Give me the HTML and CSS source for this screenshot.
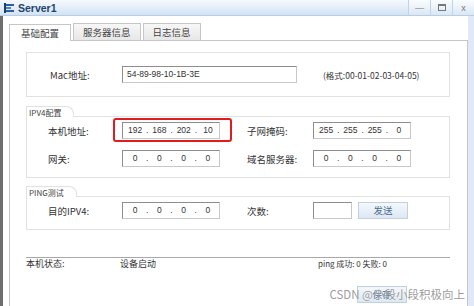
FILE: index.html
```html
<!DOCTYPE html>
<html lang="zh-CN">
<head>
  <meta charset="UTF-8" />
  <title>Server1</title>
  <link rel="stylesheet" href="styles.css">
</head>
<body>

<div class="titlebar">
  <svg class="logo" width="11" height="10" viewBox="0 0 11 10">
    <rect x="1" y="1" width="9" height="2" fill="#2d5f9a"/>
    <rect x="1" y="4" width="6" height="2" fill="#4a86c5"/>
    <rect x="1" y="7" width="9" height="2" fill="#2d5f9a"/>
    <rect x="0" y="0" width="2" height="10" fill="#1d3f6e"/>
  </svg>
  <span class="title">Server1</span>
  <div class="winbtns">
    <span class="wbtn">&#8212;</span>
    <span class="wbtn"><i class="maxbox"></i></span>
    <span class="wbtn">x</span>
  </div>
</div>

<div class="window">
  <div class="tabs">
    <div class="tab active">基础配置</div>
    <div class="tab">服务器信息</div>
    <div class="tab">日志信息</div>
  </div>

  <div class="panel">
    <div class="box mac">
      <div class="row">
        <span class="lbl">Mac地址:</span>
        <span class="input wide">54-89-98-10-1B-3E</span>
        <span class="hint">(格式:00-01-02-03-04-05)</span>
      </div>
    </div>

    <div class="group ipv4">
      <div class="head"><span class="legend">IPV4配置</span><span class="fill"></span></div>
      <div class="box">
        <div class="row">
          <span class="lbl">本机地址:</span>
          <span class="input ip marked"><i>192</i><b>.</b><i>168</i><b>.</b><i>202</i><b>.</b><i>10</i></span>
          <span class="lbl2">子网掩码:</span>
          <span class="input ip"><i>255</i><b>.</b><i>255</i><b>.</b><i>255</i><b>.</b><i>0</i></span>
        </div>
        <div class="row">
          <span class="lbl">网关:</span>
          <span class="input ip"><i>0</i><b>.</b><i>0</i><b>.</b><i>0</i><b>.</b><i>0</i></span>
          <span class="lbl2">域名服务器:</span>
          <span class="input ip"><i>0</i><b>.</b><i>0</i><b>.</b><i>0</i><b>.</b><i>0</i></span>
        </div>
      </div>
    </div>

    <div class="group ping">
      <div class="head"><span class="legend">PING测试</span><span class="fill"></span></div>
      <div class="box">
        <div class="row">
          <span class="lbl">目的IPV4:</span>
          <span class="input ip"><i>0</i><b>.</b><i>0</i><b>.</b><i>0</i><b>.</b><i>0</i></span>
          <span class="lbl2">次数:</span>
          <span class="input count"></span>
          <span class="btn">发送</span>
        </div>
      </div>
    </div>

    <div class="status">
      <span class="st-lbl">本机状态:</span>
      <span class="st-val">设备启动</span>
      <span class="st-ping">ping 成功: 0 失败: 0</span>
    </div>

    <div class="save-row">
      <span class="btn save">保存</span>
    </div>
  </div>
</div>

<div class="watermark">CSDN @小段小段积极向上</div>

</body>
</html>
```

FILE: styles.css
```css
* {
  box-sizing: border-box;
  margin: 0;
  padding: 0;
}
html, body {
  width: 474px;
  height: 306px;
  overflow: hidden;
}
body {
  font-family: "Noto Sans CJK SC", "DejaVu Sans", sans-serif;
  font-size: 9.5px;
  color: #333;
  background: #fff;
  position: relative;
}
.titlebar {
  height: 16px;
  display: flex;
  align-items: center;
  padding-left: 4px;
  background: linear-gradient(to bottom, #f6f9fd, #d3e3f3);
  border-bottom: 1px solid #b7cde4;
}
.logo {
  margin-right: 3px;
}
.title {
  font-family: "Liberation Sans", sans-serif;
  font-weight: bold;
  font-size: 10.5px;
  color: #22446e;
}
.winbtns {
  margin-left: auto;
  display: flex;
  align-self: stretch;
}
.wbtn {
  width: 22px;
  border-left: 1px solid #c2d3e6;
  display: flex;
  align-items: center;
  justify-content: center;
  color: #777;
  font-family: "Liberation Sans", sans-serif;
  font-size: 9px;
  background: linear-gradient(to bottom, #fbfdff, #dbe7f3);
}
.maxbox {
  width: 8px;
  height: 7px;
  border: 1px solid #777;
  border-top-width: 2px;
}
.window {
  height: 290px;
  border-left: 3px solid #6e6e6e;
  border-right: 6px solid #dfeaf6;
  padding: 7px 0 0 6px;
}
.tabs {
  display: flex;
  gap: 2px;
  height: 17px;
}
.tab {
  border: 1px solid #c6c6c6;
  border-bottom: none;
  background: linear-gradient(to bottom, #f7f7f7, #e7e7e7);
  padding: 0 9px;
  line-height: 16px;
  color: #444;
}
.tab.active {
  background: #fff;
  position: relative;
  top: 1px;
  padding: 0 11px;
}
.panel {
  border: 1px solid #c6c6c6;
  height: 300px;
  padding: 11px 17px 0 16px;
}
.box {
  border: 1px solid #e1e1e1;
  padding: 5px 0 10px 21px;
}
.box.mac {
  padding: 13px 0 13px 23px;
}
.row {
  display: flex;
  align-items: center;
  height: 17px;
  white-space: nowrap;
}
.row + .row {
  margin-top: 11px;
}
.lbl {
  width: 74px;
}
.mac .lbl {
  width: 72px;
}
.lbl2 {
  width: 66px;
  margin-left: 27px;
}
.input {
  height: 17px;
  border: 1px solid #8e8e8e;
  border-right-color: #c8c8c8;
  border-bottom-color: #c8c8c8;
  background: #fff;
  font-family: "Liberation Sans", sans-serif;
  font-size: 8.5px;
  line-height: 15px;
  color: #333;
}
.input.wide {
  width: 175px;
  padding-left: 4px;
}
.hint {
  margin-left: 26px;
  font-size: 8.5px;
}
.input.ip {
  width: 98px;
  display: flex;
  justify-content: space-between;
  padding: 0 4px 0 5px;
}
.input.ip i {
  font-style: normal;
  min-width: 14px;
  text-align: center;
}
.input.ip b {
  font-weight: normal;
}
.input.marked {
  position: relative;
}
.input.marked::after {
  content: "";
  position: absolute;
  top: -5px;
  bottom: -4px;
  left: -10px;
  right: -13px;
  border: 2px solid #e01c1c;
  border-radius: 3px;
}
.input.count {
  width: 39px;
}
.btn {
  width: 50px;
  height: 17px;
  margin-left: 6px;
  border: 1px solid #c2cfdd;
  background: linear-gradient(to bottom, #f4f8fc, #dde8f3);
  color: #4d6c8f;
  text-align: center;
  line-height: 15px;
}
.group {
  margin-top: 9px;
}
.group.ping {
  margin-top: 8px;
}
.head {
  display: flex;
  height: 11px;
}
.legend {
  border: 1px solid #e1e1e1;
  border-bottom: none;
  border-top-right-radius: 8px;
  padding: 0 12px 0 2px;
  font-size: 8px;
  line-height: 11px;
  color: #444;
  background: #fff;
}
.fill {
  flex: 1;
  border-bottom: 1px solid #e1e1e1;
}
.group .box {
  border-top: none;
}
.status {
  margin-top: 27px;
  border-top: 1px solid #a8a8a8;
  display: flex;
  height: 14px;
  line-height: 12px;
  font-size: 9px;
}
.st-lbl {
  width: 94px;
}
.st-val {
  width: 198px;
}
.st-ping {
  font-size: 8px;
}
.save-row {
  display: flex;
  padding: 15px 0 0 331px;
}
.btn.save {
  margin: 0;
}
.watermark {
  position: absolute;
  right: 9px;
  bottom: 4px;
  font-size: 11.5px;
  color: rgba(120, 120, 120, 0.75);
  text-shadow: 0 0 1px #fff;
}
```
